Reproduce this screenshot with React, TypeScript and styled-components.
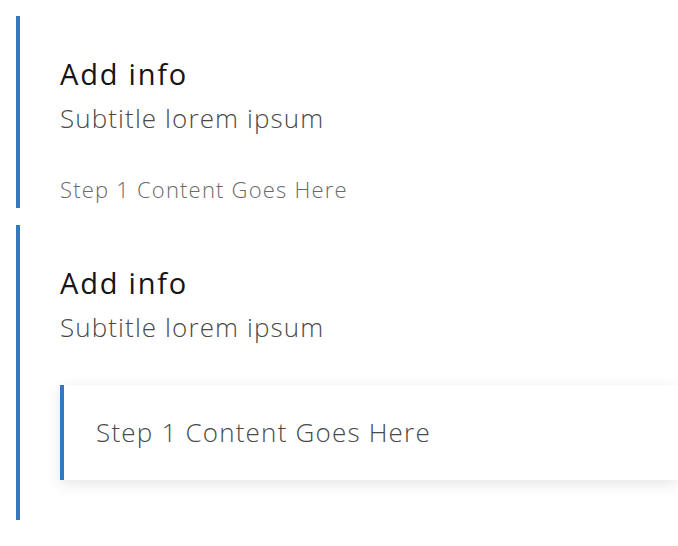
import React from "react";
import styled, {createGlobalStyle} from "styled-components";

const GlobalStyle = createGlobalStyle`
  html, body {
    margin: 0;
    padding: 0;
    background: #ffffff;
    overflow-x: hidden;
  }
  body {
    font-family: "Open Sans", "Noto Sans", sans-serif;
  }
`;

const Steps = styled.main`
  display: flex;
  flex-direction: column;
  gap: 17px;
  padding: 16px 0 0 16px;
`;

const Step = styled.section<{ $active?: boolean }>`
  border-left: 4px solid #3478c0;
  padding: 40px 0 ${props => (props.$active ? "40px" : "5px")} 40px;
`;

const Title = styled.h2`
  margin: 0;
  font-size: 29px;
  line-height: 36px;
  letter-spacing: 1.8px;
  font-weight: 400;
  color: #151515;
`;

const Subtitle = styled.p`
  margin: 10px 0 0;
  font-size: 26px;
  line-height: 32px;
  letter-spacing: 1.1px;
  font-weight: 300;
  color: #4a4a4a;
`;

const Content = styled.p`
  margin: 41px 0 0;
  font-size: 22px;
  line-height: 28px;
  letter-spacing: 1.2px;
  color: #6a6a6a;
  font-weight: 300;
`;

const Card = styled.div`
  margin: 42px 0 0;
  border-left: 4px solid #3478c0;
  background: #ffffff;
  box-shadow: 0 4px 14px rgba(0, 0, 0, 0.1);
  padding: 31px 32px 32px;
  font-size: 26px;
  line-height: 32px;
  letter-spacing: 1.2px;
  font-weight: 300;
  color: #4a4a4a;
`;

function App() {
    return (
        <>
            <GlobalStyle/>
            <Steps>
                <Step>
                    <Title>Add info</Title>
                    <Subtitle>Subtitle lorem ipsum</Subtitle>
                    <Content>Step 1 Content Goes Here</Content>
                </Step>
                <Step $active>
                    <Title>Add info</Title>
                    <Subtitle>Subtitle lorem ipsum</Subtitle>
                    <Card>Step 1 Content Goes Here</Card>
                </Step>
            </Steps>
        </>
    );
}

export default App;
